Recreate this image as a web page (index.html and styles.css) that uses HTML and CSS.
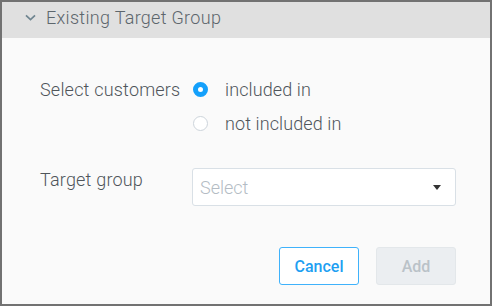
FILE: index.html
```html
<!DOCTYPE html>
<html lang="en">
<head>
	<meta charset="UTF-8">
	<title>Existing Target Group</title>
	<link rel="stylesheet" href="styles.css">
</head>
<body>
	<div class="panel">
		<div class="panel-head">
			<svg class="chev" width="11" height="7" viewBox="0 0 11 7"><path d="M1 1.3 L5.5 5.5 L10 1.3" fill="none" stroke="#6f8590" stroke-width="1.7"/></svg>
			<span>Existing Target Group</span>
		</div>
		<div class="panel-body">
			<div class="row row-radios">
				<div class="label">Select customers</div>
				<div class="radios">
					<label class="radio"><span class="dot checked"></span>included in</label>
					<label class="radio"><span class="dot"></span>not included in</label>
				</div>
			</div>
			<div class="row row-select">
				<div class="label">Target group</div>
				<div class="select">
					<span class="placeholder">Select</span>
					<span class="caret"></span>
				</div>
			</div>
			<div class="actions">
				<button class="btn btn-cancel">Cancel</button>
				<button class="btn btn-add">Add</button>
			</div>
		</div>
	</div>
</body>
</html>
```

FILE: styles.css
```css
*{
	margin: 0;
	padding: 0;
	box-sizing: border-box;
}
body{
	font-family: Roboto, "Liberation Sans", sans-serif;
	background: #fafafa;
}
.panel{
	width: 492px;
	height: 306px;
	border: 2px solid #727272;
	background: #fafafa;
	display: flex;
	flex-direction: column;
}
.panel-head{
	height: 36px;
	background: #e0e0e0;
	display: flex;
	align-items: center;
	padding-left: 23px;
	padding-bottom: 6px;
	color: #5d666c;
	font-size: 18px;
	font-weight: 300;
	letter-spacing: 0.3px;
}
.chev{
	margin-right: 10px;
	margin-top: 1px;
}
.panel-body{
	flex: 1;
	padding: 41px 34px 0 38px;
	display: flex;
	flex-direction: column;
}
.row{
	display: flex;
}
.label{
	width: 152px;
	font-size: 18px;
	font-weight: 300;
	letter-spacing: 0.2px;
	color: #4f555a;
}
.radios{
	display: flex;
	flex-direction: column;
	gap: 13px;
}
.radio{
	display: flex;
	align-items: center;
	font-size: 18px;
	font-weight: 300;
	letter-spacing: 0.1px;
	color: #4f555a;
	height: 21px;
}
.dot{
	width: 15px;
	height: 15px;
	border-radius: 50%;
	border: 1px solid #cdd4db;
	background: #fff;
	margin-right: 17px;
	margin-left: 1px;
}
.dot.checked{
	border: 5px solid #14a0fb;
	background: #fff;
}
.row-select{
	margin-top: 35px;
}
.select{
	width: 264px;
	height: 38px;
	border: 1px solid #d9e0e6;
	border-radius: 3px;
	background: #fff;
	display: flex;
	align-items: center;
	justify-content: space-between;
	padding: 0 14px 0 7px;
	margin-top: -1px;
}
.placeholder{
	font-size: 18px;
	font-weight: 300;
	color: #b4bcc4;
}
.caret{
	width: 0;
	height: 0;
	border-left: 4px solid transparent;
	border-right: 4px solid transparent;
	border-top: 5px solid #333;
}
.actions{
	display: flex;
	justify-content: flex-end;
	gap: 17px;
	margin-top: 41px;
}
.btn{
	width: 80px;
	height: 38px;
	border-radius: 3px;
	font-family: Roboto, "Liberation Sans", sans-serif;
	font-size: 16px;
	font-weight: 500;
}
.btn-cancel{
	border: 1px solid #3fb2fb;
	background: #fff;
	color: #1e9ff2;
}
.btn-add{
	border: 1px solid #e3e7ea;
	background: #ebeef1;
	color: #bac2c8;
}
```
